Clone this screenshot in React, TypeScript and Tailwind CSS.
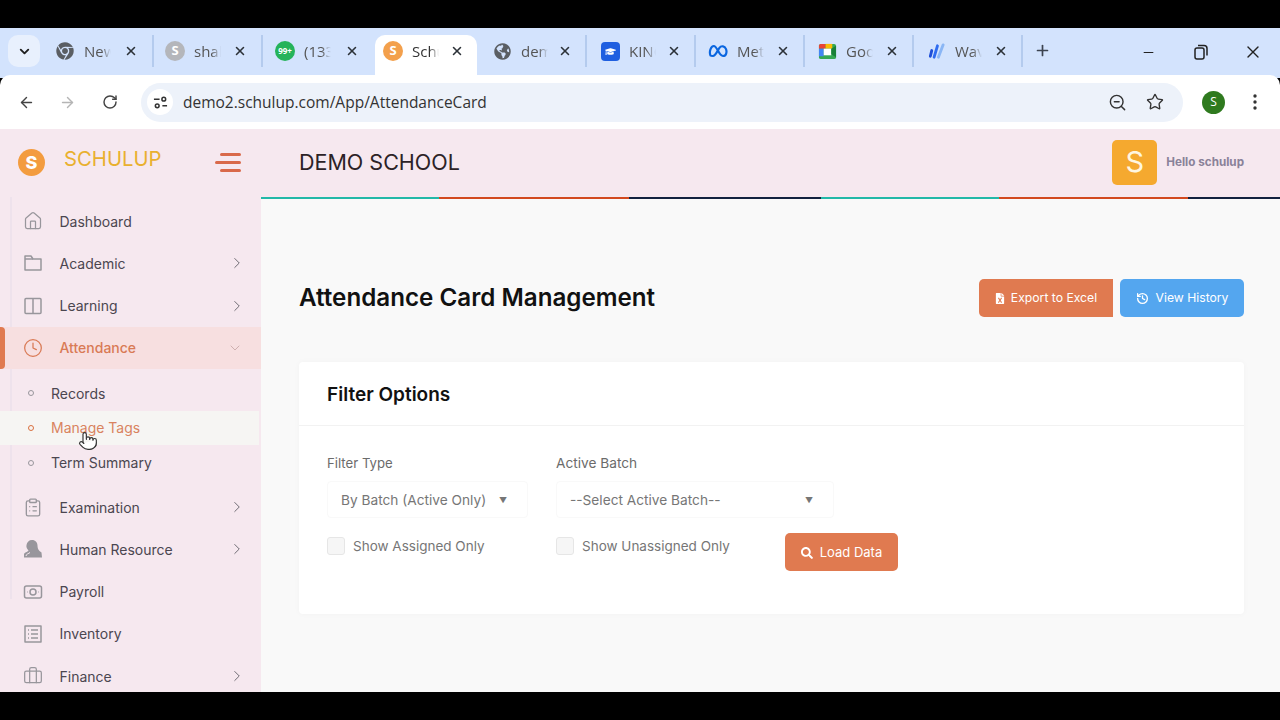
import React from "react";
import { ChevronDown, ChevronRight, Plus, X, Minus, ArrowLeft, ArrowRight, RotateCw, ZoomOut, Star, Clock, Home, History, Pointer, ClipboardList, Briefcase } from "lucide-react";
import { FaChrome, FaGlobeAmericas, FaSearch, FaFileExcel, FaGraduationCap } from "react-icons/fa";

const SBadge = ({ c }: { c: string }) => (
  <span className={`flex h-[20px] w-[20px] items-center justify-center rounded-full text-[13px] font-bold text-white ${c}`}>S</span>
);

const Meta = () => (
  <svg viewBox="0 0 24 16" className="h-[14px] w-[20px]" fill="none" stroke="#0a66e0" strokeWidth="2.600" strokeLinecap="round">
    <path d="M3 13.500C1 9 3.500 2 7 2C11 2 13 14 18 14C22 14 23 9 21.500 5.500C20 2 16 1 13.500 4.500C11 8 9 14 6 14C4.500 14 3.500 14 3 13.500Z" />
  </svg>
);
const Wave = () => (
  <svg viewBox="0 0 20 20" className="h-[19px] w-[19px]" fill="none" strokeWidth="3" strokeLinecap="round">
    <path d="M5 9L3.500 15" stroke="#1f4fd8" />
    <path d="M11 4L7.500 16" stroke="#2f6cf0" />
    <path d="M17 3L12 16" stroke="#8ab6f5" />
  </svg>
);
const Meet = () => (
  <svg viewBox="0 0 20 20" className="h-[19px] w-[19px]">
    <rect x="1" y="2" width="18" height="16" rx="2" fill="#34a853" />
    <path d="M1 4a2 2 0 0 1 2-2h5v5H1z" fill="#ea4335" />
    <path d="M8 2h7v5H8z" fill="#fbbc04" />
    <path d="M1 7h5v8H1z" fill="#4285f4" />
    <path d="M6 7h8v7H6z" fill="#fff" />
    <path d="M14 7l5-3v12l-5-3z" fill="#188038" />
  </svg>
);

const tabs: { icon: React.ReactNode; t: string; cls: string; active?: boolean }[] = [
  { icon: <FaChrome className="h-[18px] w-[18px] text-[#5a5e63]" />, t: "New", cls: "w-[109px] pl-[10px] pr-[14px] border-r-2 border-[#b4cbee]" },
  { icon: <SBadge c="bg-[#b4b6bb]" />, t: "shala", cls: "w-[109px] pl-[11px] pr-[14px] border-r-2 border-[#b4cbee]" },
  { icon: <span className="flex h-[20px] w-[20px] items-center justify-center rounded-full bg-[#25b35a] text-[8px] font-bold text-white">99+</span>, t: "(133", cls: "w-[112px] pl-[12px] pr-[16px]" },
  { icon: <SBadge c="bg-[#f3a04c]" />, t: "Schu", active: true, cls: "" },
  { icon: <FaGlobeAmericas className="h-[17px] w-[17px] text-[#5a5e63]" />, t: "dem", cls: "w-[110px] pl-[15px] pr-[13px] border-r-2 border-[#b4cbee]" },
  { icon: <span className="flex h-[19px] w-[19px] items-center justify-center rounded-[4px] bg-[#1f5fe0] text-white"><FaGraduationCap className="h-[11px] w-[11px]" /></span>, t: "KING", cls: "w-[109px] pl-[13px] pr-[13px] border-r-2 border-[#b4cbee]" },
  { icon: <Meta />, t: "Meta", cls: "w-[109px] pl-[12px] pr-[13px] border-r-2 border-[#b4cbee]" },
  { icon: <Meet />, t: "Goo", cls: "w-[109px] pl-[12px] pr-[13px] border-r-2 border-[#b4cbee]" },
  { icon: <Wave />, t: "Wav", cls: "w-[109px] pl-[12px] pr-[13px] border-r-2 border-[#b4cbee]" },
];

const Ic = ({ children }: { children: React.ReactNode }) => (
  <svg viewBox="0 0 20 20" className="h-[20px] w-[20px]" fill="none" stroke="currentColor" strokeWidth="1.500" strokeLinejoin="round">{children}</svg>
);
const FolderI = () => <Ic><path d="M2 3h6l2 3h8v11H2z" /><path d="M2 6h8" /></Ic>;
const BookI = () => <Ic><rect x="2" y="2.500" width="16" height="15" rx="1" /><path d="M10 2.500v15" /></Ic>;
const PersonI = () => (
  <svg viewBox="0 0 20 20" className="h-[20px] w-[20px]" fill="currentColor">
    <path d="M9 1c3.500 0 5.500 2.500 5.500 5.500 0 2 .5 4 2 5.500l2 1.500.5 5H1v-3c0-2 3.500-2.500 4.500-4C4 10 3 8 3.500 6 4 3 6 1 9 1z" />
    <path d="M3 17c0-2 3-2.500 4-3.500" stroke="#f6e8ef" fill="none" />
  </svg>
);
const PayI = () => <Ic><rect x="1.500" y="4" width="17" height="12" rx="2" /><circle cx="10" cy="10" r="3" /><path d="M4.500 10h.5M15 10h.5" /></Ic>;
const InvI = () => <Ic><rect x="2" y="2" width="16" height="16" /><path d="M8 6h7M8 10h7M8 14h7M5 6h1M5 10h1M5 14h1" /></Ic>;

type Item = { label: string; icon: React.ReactNode; arrow?: boolean };
const before: Item[] = [
  { label: "Dashboard", icon: <Home className="h-[20px] w-[20px]" strokeWidth={1.5} /> },
  { label: "Academic", icon: <FolderI />, arrow: true },
  { label: "Learning", icon: <BookI />, arrow: true },
];
const after: Item[] = [
  { label: "Examination", icon: <ClipboardList className="h-[21px] w-[21px]" strokeWidth={1.6} />, arrow: true },
  { label: "Human Resource", icon: <PersonI />, arrow: true },
  { label: "Payroll", icon: <PayI /> },
  { label: "Inventory", icon: <InvI /> },
  { label: "Finance", icon: <Briefcase className="h-[20px] w-[20px]" strokeWidth={1.5} />, arrow: true },
];

const NavRow = ({ it }: { it: Item }) => (
  <div className="flex h-[42.3px] shrink-0 items-center pl-[23px] pr-[15px] text-[14px] text-[#4b4650]">
    <span className="flex w-[20px] justify-center text-[#98969c]">{it.icon}</span>
    <span className="ml-[16.500px] flex-1">{it.label}</span>
    {it.arrow && <ChevronRight className="h-[18px] w-[18px] text-[#6b6870]" strokeWidth={1.3} />}
  </div>
);

const SubRow = ({ label, active }: { label: string; active?: boolean }) => (
  <div className={`relative z-10 flex h-[34.7px] items-center pl-[28px] text-[14px] ${active ? "mr-[2px] bg-[#f6f5f3] text-[#d9835f]" : "text-[#4b4650]"}`}>
    <span className={`h-[6px] w-[6px] rounded-full border ${active ? "border-[#d9703f]" : "border-[#98969c]"}`} />
    <span className="ml-[17px]">{label}</span>
  </div>
);

const lines = [
  ["w-[178px]", "bg-[#22b8a8]"],
  ["w-[190px]", "bg-[#d2491f]"],
  ["w-[192px]", "bg-[#12213f]"],
  ["w-[178px]", "bg-[#22b8a8]"],
  ["w-[189px]", "bg-[#d2491f]"],
  ["flex-1", "bg-[#12213f]"],
];

export default function App() {
  return (
    <div className="flex h-[720px] w-[1280px] flex-col overflow-hidden bg-black pb-[28px] pt-[28px] font-['Inter',sans-serif]">
      {/* tab strip */}
      <div className="flex h-[50px] shrink-0 items-start bg-[#d3e3fd] font-['Open_Sans',sans-serif]">
        <div className="ml-[8px] mr-[5px] mt-[7px] flex h-[32px] w-[32px] items-center justify-center rounded-[10px] bg-[#e8f0fd]">
          <ChevronDown className="h-[15px] w-[15px] text-[#1f1f1f]" strokeWidth={3} />
        </div>
        {tabs.map((t, i) => (
          <div key={i} className={`flex shrink-0 items-center ${t.active ? "z-10 mt-[7px] h-[47px] w-[102px] rounded-t-[10px] bg-white pb-[15px] pl-[8px] pr-[13px] text-[#333]" : `mt-[7px] h-[32px] text-[#555] ${t.cls}`}`}>
            <span className="flex w-[20px] shrink-0 justify-center">{t.icon}</span>
            <span className="ml-[9px] w-[27px] overflow-hidden whitespace-nowrap pt-[1px] text-[15px] [mask-image:linear-gradient(90deg,#000_65%,transparent)]">{t.t}</span>
            <X className="ml-auto h-[14px] w-[14px] text-[#2c3238]" strokeWidth={2.6} />
          </div>
        ))}
        <Plus className="ml-[11px] mt-[14px] h-[17px] w-[17px] text-[#3c4350]" strokeWidth={2.4} />
        <div className="ml-auto flex items-center pt-[14px]">
          <Minus className="mr-[38px] h-[15px] w-[15px] text-[#222]" strokeWidth={1.8} />
          <svg viewBox="0 0 14 16" className="mr-[35px] h-[16px] w-[14px]" fill="none" stroke="#222" strokeWidth="1.500"><rect x="1" y="4" width="9" height="11" rx="2" /><path d="M4 1.500h6a3 3 0 0 1 3 3v7" /></svg>
          <X className="mr-[17px] h-[20px] w-[20px] text-[#222]" strokeWidth={1.6} />
        </div>
      </div>

      {/* toolbar */}
      <div className="relative -mt-[3px] flex h-[54px] shrink-0 items-center rounded-t-[10px] bg-white pl-[18px] font-['Open_Sans',sans-serif]">
        <ArrowLeft className="h-[17px] w-[17px] text-[#444]" strokeWidth={2} />
        <ArrowRight className="ml-[24px] h-[17px] w-[17px] text-[#b5b5b5]" strokeWidth={2} />
        <RotateCw className="ml-[26px] h-[16px] w-[16px] text-[#444]" strokeWidth={2.2} />
        <div className="ml-[23px] flex h-[39px] w-[1042px] items-center rounded-full bg-[#edf2fa] pl-[6px] pr-[19px]">
          <span className="flex h-[26px] w-[26px] items-center justify-center rounded-full bg-white">
            <svg viewBox="0 0 16 16" className="h-[15px] w-[15px]" fill="none" stroke="#333" strokeWidth="1.600"><path d="M1 4.500h6M10 11.500h5" /><circle cx="11.500" cy="4.500" r="2" /><circle cx="4.500" cy="11.500" r="2" /></svg>
          </span>
          <span className="ml-[10px] pt-[1px] text-[15.500px] text-[#333]">demo2.schulup.com/App/AttendanceCard</span>
          <ZoomOut className="ml-auto h-[19px] w-[19px] text-[#333]" strokeWidth={1.8} />
          <Star className="ml-[19px] h-[18px] w-[18px] text-[#333]" strokeWidth={1.8} />
        </div>
        <span className="ml-[19px] flex h-[23px] w-[23px] items-center justify-center rounded-full bg-[#2f7a1f] text-[12px] text-white">S</span>
        <svg viewBox="0 0 4 16" className="ml-[28px] h-[16px] w-[4px]" fill="#333"><circle cx="2" cy="2" r="1.700" /><circle cx="2" cy="8" r="1.700" /><circle cx="2" cy="14" r="1.700" /></svg>
      </div>

      {/* page */}
      <div className="flex min-h-0 flex-1 bg-[#f9f9f9]">
        <aside className="relative flex w-[261px] shrink-0 flex-col overflow-hidden bg-[#f6e8ef]">
          <span className="absolute left-[10px] top-[68px] h-[402px] w-[2px] bg-[#eee2ec]" />
          <div className="flex h-[71px] shrink-0 items-center pb-[4px] pl-[18px]">
            <span className="flex h-[27px] w-[27px] items-center justify-center rounded-full bg-[#f39c3f] text-[18px] font-extrabold text-white">S</span>
            <span className="ml-[19px] -mt-[7px] text-[20.300px] text-[#e9b02e]">SCHULUP</span>
            <span className="ml-[53px] flex flex-col items-end gap-[5px]">
              <span className="h-[3px] w-[21px] rounded bg-[#d9694a]" />
              <span className="h-[3px] w-[26px] rounded bg-[#d9694a]" />
              <span className="h-[3px] w-[21px] rounded bg-[#d9694a]" />
            </span>
          </div>
          {before.map((it) => <NavRow key={it.label} it={it} />)}
          <div className="relative z-10 flex h-[42px] shrink-0 items-center bg-[#f7dfe0] pl-[23px] pr-[18px] text-[14px] font-medium text-[#d97a55]">
            <span className="absolute bottom-0 left-0 top-0 w-[5px] rounded-r bg-[#e07a50]" />
            <Clock className="h-[20px] w-[20px]" strokeWidth={1.5} />
            <span className="ml-[16.500px] flex-1">Attendance</span>
            <ChevronDown className="h-[16px] w-[16px] text-[#c9a8a8]" strokeWidth={1.3} />
          </div>
          <div className="shrink-0 pb-[6px] pt-[7px]">
            <SubRow label="Records" />
            <SubRow label="Manage Tags" active />
            <SubRow label="Term Summary" />
          </div>
          {after.map((it) => <NavRow key={it.label} it={it} />)}
          <Pointer className="absolute left-[78px] top-[302px] z-20 h-[20px] w-[20px] fill-white text-[#333]" strokeWidth={1.4} />
        </aside>

        <main className="flex min-w-0 flex-1 flex-col">
          <header className="flex h-[68px] shrink-0 items-center bg-[#f6e8ef] pl-[38px] pr-[36px]">
            <span className="-mt-[2px] text-[21.500px] text-[#2c2226]">DEMO SCHOOL</span>
            <span className="-mt-[2px] ml-auto flex h-[45px] w-[45px] items-center justify-center rounded-[5px] bg-[#f5a92f] text-[29px] text-[#fff6e0]">S</span>
            <span className="ml-[9px] text-[11.700px] font-bold text-[#8a8299]">Hello schulup</span>
          </header>
          <div className="flex h-[2px] shrink-0">
            {lines.map(([w, c], i) => <span key={i} className={`${w} ${c}`} />)}
          </div>

          <div className="flex items-center pl-[38px] pr-[36px] pt-[80px]">
            <h1 className="text-[24.200px] font-semibold text-[#111]">Attendance Card Management</h1>
            <button className="ml-auto flex h-[38px] w-[134px] items-center justify-center gap-[6px] rounded-l-[5px] bg-[#e07a50] text-[12.200px] text-[#fff]">
              <FaFileExcel className="h-[11px] w-[10px]" /> Export to Excel
            </button>
            <button className="ml-[7px] flex h-[38px] w-[124px] items-center justify-center gap-[7px] rounded-[5px] bg-[#54a6ef] text-[12.200px] text-white">
              <History className="h-[13px] w-[13px]" strokeWidth={2.4} /> View History
            </button>
          </div>

          <section className="ml-[38px] mr-[36px] mt-[45px] h-[252px] shrink-0 rounded-[4px] bg-white shadow-[0_0_6px_rgba(0,0,0,0.03)]">
            <div className="flex h-[64px] items-center border-b border-[#f2f2f2] pl-[28px] pt-[4px] text-[19px] font-semibold text-[#111]">Filter Options</div>
            <div className="pl-[28px] pt-[28px]">
              <div className="flex text-[13.700px] text-[#6b6b6b]">
                <div className="w-[229px]">
                  <div className="h-[19px] text-[13.200px] leading-[19px]">Filter Type</div>
                  <div className="mt-[8px] flex h-[37px] w-[201px] items-center rounded-[4px] border border-[#f9f9f9] pl-[13px] pr-[20px] pt-[1px] text-[#767676]">
                    <span className="flex-1">By Batch (Active Only)</span>
                    <span className="text-[8px]">▼</span>
                  </div>
                </div>
                <div>
                  <div className="h-[19px] leading-[19px]">Active Batch</div>
                  <div className="mt-[8px] flex h-[37px] w-[278px] items-center rounded-[4px] border border-[#f9f9f9] pl-[13px] pr-[20px] pt-[1px] text-[#767676]">
                    <span className="flex-1">--Select Active Batch--</span>
                    <span className="text-[8px]">▼</span>
                  </div>
                </div>
              </div>
              <div className="mt-[15px] flex items-start text-[13.500px] text-[#767676]">
                <label className="mt-[3px] flex w-[229px] items-center gap-[8px]">
                  <span className="h-[18px] w-[18px] rounded-[3px] border border-[#e6e6e6] bg-[#f6f6f6]" />Show Assigned Only
                </label>
                <label className="mt-[3px] flex w-[229px] items-center gap-[8px]">
                  <span className="h-[18px] w-[18px] rounded-[3px] border border-[#e6e6e6] bg-[#f6f6f6]" />Show Unassigned Only
                </label>
                <button className="flex h-[38px] w-[113px] items-center justify-center gap-[7px] rounded-[5px] bg-[#e07a50] pt-[1px] text-[13px] text-white">
                  <FaSearch className="h-[12px] w-[12px]" /> Load Data
                </button>
              </div>
            </div>
          </section>
        </main>
      </div>
    </div>
  );
}
